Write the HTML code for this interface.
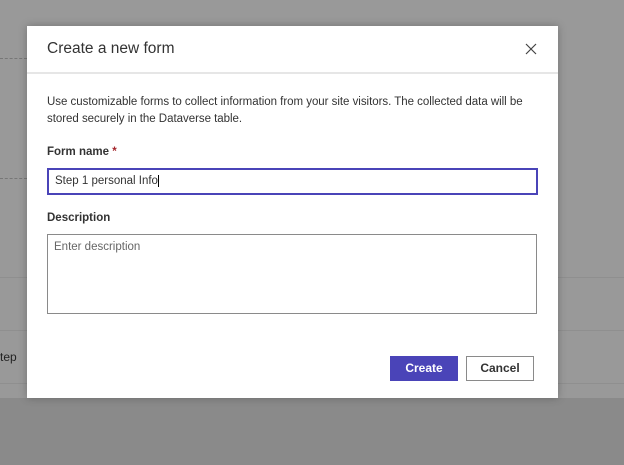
<!DOCTYPE html>
<html><head><style>
body{margin:0;width:624px;height:465px;overflow:hidden;background:#999;font-family:"Liberation Sans",sans-serif;position:relative}
.bg2{position:absolute;left:0;top:398px;width:624px;height:67px;background:#8a8a8a}
.hl{position:absolute;left:0;width:624px;height:1px;background:#8f8f8f}
.dash{position:absolute;left:0;width:27px;border-top:1px dashed #777}
.dlg{position:absolute;left:27px;top:26px;width:531px;height:372px;background:#fff;box-shadow:0 0 8px rgba(0,0,0,.25)}
.hdr{position:absolute;left:0;top:0;width:531px;height:46px;border-bottom:2px solid #e6e6e6}
.t{position:absolute;left:20px;top:14px;font-size:15.5px;color:#333}
.x{position:absolute;left:498px;top:17px}
.p{position:absolute;left:20px;top:68px;width:500px;font-size:11.5px;line-height:17px;color:#333;letter-spacing:-0.03px}
.lbl{position:absolute;left:20px;font-size:11.5px;font-weight:bold;color:#333}
.in{position:absolute;left:20px;width:488px;border:1px solid #8a8a8a;font-size:11.5px;color:#333}
</style></head><body>
<div class="bg2"></div>
<div class="hl" style="top:277px"></div>
<div class="hl" style="top:330px"></div>
<div class="hl" style="top:383px"></div>
<div class="dash" style="top:58px"></div>
<div class="dash" style="top:178px"></div>
<div style="position:absolute;left:0;top:350px;font-size:12px;color:#222">tep</div>
<div class="dlg">
<div class="hdr"><div class="t">Create a new form</div>
<svg class="x" width="12" height="12" viewBox="0 0 12 12"><path d="M1 1L11 11M11 1L1 11" stroke="#444" stroke-width="1.2"/></svg></div>
<div class="p">Use customizable forms to collect information from your site visitors. The collected data will be stored securely in the Dataverse table.</div>
<div class="lbl" style="top:120px">Form name <span style="color:#a4262c">*</span></div>
<div class="in" style="top:142px;height:23px;border:2px solid #4a44b8;width:487px"><span style="position:absolute;left:6px;top:5px">Step 1 personal Info<span style="border-left:1px solid #000;margin-left:0"></span></span></div>
<div class="lbl" style="top:186px">Description</div>
<div class="in" style="top:208px;height:78px"><span style="position:absolute;left:6px;top:6px;color:#666">Enter description</span></div>
<div style="position:absolute;left:363px;top:330px;width:68px;height:25px;background:#4a44b8;color:#fff;font-size:12px;font-weight:bold;text-align:center;line-height:25px">Create</div>
<div style="position:absolute;left:439px;top:330px;width:66px;height:23px;border:1px solid #8a8a8a;color:#333;font-size:12px;font-weight:bold;text-align:center;line-height:23px">Cancel</div>
</div>
</body></html>
